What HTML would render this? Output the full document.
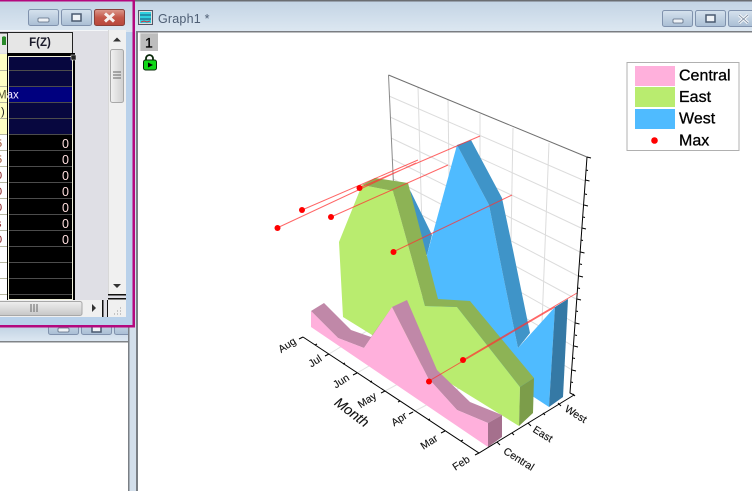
<!DOCTYPE html>
<html><head><meta charset="utf-8">
<style>
html,body{margin:0;padding:0;background:#fff;width:752px;height:491px;overflow:hidden}
svg{display:block}
text{font-family:"Liberation Sans",sans-serif}
</style></head><body>
<svg width="752" height="491" viewBox="0 0 752 491" xmlns="http://www.w3.org/2000/svg">
<defs>
<linearGradient id="tb" x1="0" y1="0" x2="0" y2="1"><stop offset="0" stop-color="#c2d3e4"/><stop offset="1" stop-color="#dce7f1"/></linearGradient>
<linearGradient id="btn" x1="0" y1="0" x2="0" y2="1"><stop offset="0" stop-color="#d6e2ee"/><stop offset="1" stop-color="#a9bed4"/></linearGradient>
<linearGradient id="cls" x1="0" y1="0" x2="0" y2="1"><stop offset="0" stop-color="#dc9a8e"/><stop offset=".5" stop-color="#c4584a"/><stop offset="1" stop-color="#b8483c"/></linearGradient>
<linearGradient id="thumb" x1="0" y1="0" x2="1" y2="0"><stop offset="0" stop-color="#f2f2f2"/><stop offset="1" stop-color="#cfcfcf"/></linearGradient>
<linearGradient id="hthumb" x1="0" y1="0" x2="0" y2="1"><stop offset="0" stop-color="#efefef"/><stop offset="1" stop-color="#c6c6c6"/></linearGradient>
<clipPath id="lowclip"><rect x="0" y="318" width="128" height="30"/></clipPath>
</defs>

<!-- backgrounds -->
<rect width="752" height="491" fill="#fff"/>
<rect x="128" y="0" width="10" height="491" fill="#d3dfeb"/>
<rect x="136" y="31" width="2" height="460" fill="#7a7f85"/>

<!-- right window title -->
<rect x="135" y="0" width="617" height="31" fill="url(#tb)"/>
<rect x="135" y="0" width="617" height="1.5" fill="#6a6d72"/>
<rect x="137" y="31" width="615" height="1.5" fill="#7a7d82"/>
<g stroke="#8092ad" stroke-width="1">
<rect x="662.5" y="10.5" width="30" height="16" rx="2" fill="url(#btn)"/>
<rect x="695.5" y="10.5" width="30" height="16" rx="2" fill="url(#btn)"/>
<rect x="728.5" y="10.5" width="30" height="16" rx="2" fill="url(#btn)"/>
</g>
<rect x="673" y="19" width="10" height="4" rx="1" fill="#eef2f6" stroke="#5a6a80" stroke-width=".8"/>
<rect x="706" y="15" width="9" height="7" fill="#eef2f6" stroke="#4a5a70" stroke-width="1.5"/>
<path d="M739 15l9 8M748 15l-9 8" stroke="#f2f5f8" stroke-width="3"/>
<path d="M739 15l9 8M748 15l-9 8" stroke="#6a7a90" stroke-width=".7"/>
<!-- graph icon -->
<rect x="138.5" y="10.5" width="14" height="14" fill="#ddd" stroke="#556" stroke-width="1"/>
<rect x="140" y="12" width="11" height="11" fill="#2fd0e0"/>
<path d="M140 15h11M140 19h11" stroke="#18507a" stroke-width="1"/>
<path d="M141 22l3-1 3 1 3-1" stroke="#d03040" stroke-width="1" fill="none"/>
<text x="158" y="23" font-size="12.5" fill="#4e5e74" letter-spacing=".2">Graph1 *</text>
<!-- layer 1 -->
<rect x="140" y="33" width="18" height="18" fill="#bdbdbd"/>
<path d="M140 33h18M140 33v18" stroke="#e8e8e8" stroke-width="1"/>
<text x="145" y="47.500" font-size="14" fill="#000" stroke="#000" stroke-width=".3">1</text>
<!-- lock -->
<path d="M146 60v-1.500a3.500 3.500 0 0 1 7 0v1.500" fill="none" stroke="#0a2a0a" stroke-width="1.800"/>
<rect x="143.500" y="60" width="13" height="10" rx="2" fill="#10d818" stroke="#0a2a0a" stroke-width="1"/>
<path d="M148 62.500v5l5-2.500z" fill="#000"/>

<!-- back wall grid -->
<g stroke="#dcdcdc" stroke-width="1" fill="none">
<path d="M418 87L424 298M448 100L451 315M480 114L480 335M513 128L509 354M549 143L540 375"/>
<path d="M389 96L585 181M390 117L583 205M391 138L581 228M392 159L580 252M393 179L578 276M394 200L576 299M395 221L575 323M396 242L573 346M397 263L572 370"/>
</g>
<path d="M388.5 75L587 157" stroke="#707070" stroke-width="1"/>
<path d="M388.5 75L398 283" stroke="#8a8a8a" stroke-width="1"/>
<!-- floor grid -->
<g stroke="#e2e2e2" stroke-width="1" fill="none">
<path d="M329 354L418 300M357 373L448 320M385 391L480 340M413 412L513 360"/>
</g>

<!-- West -->
<path d="M410 190L432 235L427 255L420 250Z" fill="#3f94c8"/>
<path d="M457 145L489 205L504 280L518 348L555 307L549 407L520 388L420 320L427 255Z" fill="#4fbbff"/>
<path d="M457 145L471 140L502 198L513 250L530 333L518 348L504 280L489 205Z" fill="#3f94c8"/>
<path d="M555 307L568 299L563 397L549 407Z" fill="#3579a5"/>
<!-- East -->
<path d="M362 185L393 191L425 306L457 307L520 387L519 426L343 317L339 242Z" fill="#b9ec6f"/>
<path d="M362 185L375 178L408 183L438 299L470 301L534 378L520 387L457 307L425 306L393 191Z" fill="#8db355"/>
<path d="M520 387L534 378L533 413L519 426Z" fill="#7c9d4a"/>
<!-- Central -->
<path d="M324 303L351 330L371 337L392 307L407 300L437 370L470 402L502 415L488 423L457 410L428 378L392 307L364 348L338 338L311 311Z" fill="#c088a8"/>
<path d="M311 311L338 338L364 348L392 307L428 378L457 410L488 423L488 447L311 327Z" fill="#ffb0dc"/>
<path d="M488 423L502 415L502 437L488 447Z" fill="#a5708d"/>

<!-- drop lines -->
<g stroke="#f33" stroke-width="1" opacity=".75" fill="none">
<path d="M302 210L418 160M277 228L416 163M359 188L480 136M331 217L448 165M393 252L512 195M429 381L555 307M463 360L577 293"/>
</g>
<g fill="#f00">
<circle cx="302" cy="210" r="3"/><circle cx="277.500" cy="228" r="3"/><circle cx="331" cy="217" r="3"/><circle cx="359.500" cy="188" r="3"/><circle cx="393.500" cy="252" r="3"/><circle cx="429" cy="381.500" r="3"/><circle cx="463" cy="360" r="3"/>
</g>

<!-- axes -->
<g stroke="#000" stroke-width="1" fill="none">
<path d="M303 337L479 453L574 395"/>
<path d="M587 157L570 393L574 395"/>
<path d="M303 337l-4 2M329 354l-4 2M357 373l-4 2M385 391l-4 2M413 412l-4 2M445 431l-4 2M479 453l-4 2"/>
<path d="M315 345l2-1M343 364l2-1M370 382l2-1M398 402l2-1M428 420l2-1M461 441l2-1"/>
<path d="M497 442l3 3M512 433l2 2M528 423l3 3M543 413l2 2M558 403l3 3M573 394l2 2"/>
<path d="M587 157l4 1M585.500 180l4 1M584 205l4 1M582 228l4 1M580.500 252l4 1M579 276l4 1M577 299l4 1M575.500 323l4 1M574 346l4 1M572 370l4 1"/>
<path d="M586 170l2 .5M585 194l2 .5M583 217l2 .5M581 240l2 .5M580 264l2 .5M578 288l2 .5M576 311l2 .5M575 335l2 .5M573 358l2 .5M571 382l2 .5"/>
</g>
<g font-size="10.500" fill="#111" text-anchor="middle" stroke="#111" stroke-width=".12">
<text transform="translate(289 348) rotate(-33)">Aug</text>
<text transform="translate(317 364) rotate(-33)">Jul</text>
<text transform="translate(343 384) rotate(-33)">Jun</text>
<text transform="translate(369 403) rotate(-33)">May</text>
<text transform="translate(401 422) rotate(-33)">Apr</text>
<text transform="translate(431 445) rotate(-33)">Mar</text>
<text transform="translate(463 466) rotate(-33)">Feb</text>
<text transform="translate(517 462) rotate(32)">Central</text>
<text transform="translate(541 437) rotate(32)">East</text>
<text transform="translate(574 417) rotate(32)">West</text>
<text transform="translate(349 416) rotate(37)" font-size="14" font-style="italic">Month</text>
</g>

<!-- legend -->
<rect x="627" y="62.500" width="112" height="88" fill="#fff" stroke="#b0b0b0" stroke-width="1"/>
<rect x="635" y="66" width="40" height="20" fill="#ffb0dc"/>
<rect x="635" y="87" width="40" height="20" fill="#b9ec6f"/>
<rect x="635" y="109" width="40" height="20" fill="#4fbbff"/>
<circle cx="654.500" cy="140.500" r="3.300" fill="#f00"/>
<g font-size="16" fill="#000" stroke="#000" stroke-width=".3">
<text x="679" y="80.500">Central</text>
<text x="679" y="102">East</text>
<text x="679" y="123.500">West</text>
<text x="679" y="145.500">Max</text>
</g>

<!-- lower-left window -->
<rect x="0" y="327" width="128" height="14" fill="url(#tb)"/>
<rect x="0" y="341" width="128" height="1.500" fill="#808488"/>
<rect x="128" y="327" width="1.500" height="164" fill="#7a7f85"/>
<g clip-path="url(#lowclip)">
<g stroke="#8092ad" fill="url(#btn)">
<rect x="48.500" y="318" width="30" height="16.500" rx="2"/>
<rect x="81.500" y="318" width="30" height="16.500" rx="2"/>
<rect x="114.500" y="318" width="30" height="16.500" rx="2"/>
</g>
</g>
<rect x="58" y="328" width="11" height="4" rx="1" fill="#eef2f6" stroke="#5a6a80" stroke-width=".8"/>
<rect x="92" y="326" width="9" height="6" fill="#eef2f6" stroke="#4a5a70" stroke-width="1.500"/>

<!-- upper-left window -->
<rect x="0" y="0" width="133" height="326" fill="#b9d1ea"/>
<rect x="0" y="0" width="133" height="32" fill="url(#tb)"/>
<rect x="0" y="30" width="126" height="287" fill="#dfdfe5"/>
<rect x="0" y="30" width="126" height="1" fill="#f4f6f8"/>
<g stroke="#8092ad" stroke-width="1">
<rect x="28.500" y="9.500" width="30" height="16" rx="2" fill="url(#btn)"/>
<rect x="61.500" y="9.500" width="30" height="16" rx="2" fill="url(#btn)"/>
<rect x="94.500" y="9.500" width="30" height="16" rx="2" fill="url(#cls)" stroke="#8a4038"/>
</g>
<rect x="38" y="18" width="11" height="4" rx="1" fill="#eef2f6" stroke="#5a6a80" stroke-width=".8"/>
<rect x="72" y="14" width="9" height="7" fill="#eef2f6" stroke="#4a5a70" stroke-width="1.500"/>
<path d="M105 13.500l9 8M114 13.500l-9 8" stroke="#f6f0ee" stroke-width="3"/>
<!-- row header strip -->
<rect x="0" y="54" width="7" height="80" fill="#ffffc4"/>
<rect x="0" y="134" width="7" height="166" fill="#fff"/>
<rect x="0" y="32" width="7" height="21" fill="#e8e8e8"/>
<path d="M2 37a3 3 0 0 1 4 0v8H2z" fill="#2a8a2a"/>
<rect x="0" y="32" width="7" height="1.500" fill="#222"/>
<g stroke="#b8b8a0" stroke-width="1"><path d="M0 70.500h7M0 86.500h7M0 102.500h7M0 118.500h7M0 134.500h7M0 150.500h7M0 166.500h7M0 182.500h7M0 198.500h7M0 214.500h7M0 230.500h7M0 246.500h7M0 262.500h7M0 278.500h7M0 294.500h7"/></g>
<text x="1" y="115" font-size="11" fill="#222">)</text>
<g font-size="11" fill="#8a2020">
<text x="-4" y="147" fill="#a05030">5</text><text x="-4" y="163" fill="#a05030">5</text><text x="-4" y="179">0</text><text x="-4" y="195">0</text><text x="-4" y="211">0</text><text x="-4" y="227">s</text><text x="-4" y="243">0</text>
</g>
<!-- F(Z) header -->
<rect x="7.500" y="32.500" width="65" height="21" fill="#e6e6e6" stroke="#222" stroke-width="1"/>
<text x="40" y="46" font-size="11.500" font-weight="bold" fill="#1a1a2a" text-anchor="middle">F(Z)</text>
<rect x="7" y="53" width="68" height="2" fill="#000"/>
<!-- column -->
<rect x="7" y="55" width="68" height="245" fill="#000"/>
<rect x="8.500" y="56.500" width="64" height="243" fill="#000" stroke="#f0f0d8" stroke-width="1"/>
<rect x="9" y="57" width="63" height="77" fill="#07073f"/>
<rect x="9" y="87" width="63" height="15" fill="#00007f"/>
<g stroke="#4c4c4c" stroke-width="1"><path d="M9 70.500h63M9 86.500h63M9 102.500h63M9 118.500h63M9 134.500h63M9 150.500h63M9 166.500h63M9 182.500h63M9 198.500h63M9 214.500h63M9 230.500h63M9 246.500h63M9 262.500h63M9 278.500h63M9 294.500h63"/></g>
<rect x="71" y="55" width="5" height="5" fill="#222" stroke="#eee" stroke-width=".5"/>
<text x="-3" y="98.500" font-size="11.500" fill="#f0e6ff"><tspan fill="#553">M</tspan>ax</text>
<g font-size="12.500" fill="#ffdede" text-anchor="end">
<text x="69" y="148">0</text><text x="69" y="164">0</text><text x="69" y="180">0</text><text x="69" y="196">0</text><text x="69" y="212">0</text><text x="69" y="228">0</text><text x="69" y="244">0</text>
</g>
<!-- vertical scrollbar -->
<rect x="108" y="30" width="18" height="264" fill="#f0f0f0"/>
<path d="M108.500 30v264" stroke="#d8d8d8"/>
<path d="M113 41.500h8l-4-4z" fill="#333"/>
<rect x="110.500" y="49.500" width="13" height="53" rx="2" fill="url(#thumb)" stroke="#a8a8a8"/>
<path d="M113 72h8M113 75h8M113 78h8" stroke="#666"/>
<path d="M113 284h8l-4 4z" fill="#333"/>
<rect x="108" y="294" width="18" height="1.500" fill="#111"/>
<rect x="108" y="298" width="18" height="1" fill="#111"/>
<!-- horizontal scrollbar -->
<rect x="0" y="300" width="102" height="17" fill="#f0f0f0"/>
<rect x="-2" y="301.500" width="84" height="14" rx="2" fill="url(#hthumb)" stroke="#a8a8a8"/>
<path d="M31 304v8M34 304v8M37 304v8" stroke="#666"/>
<path d="M92 304v8l4-4z" fill="#333"/>
<rect x="102" y="300" width="1.500" height="17" fill="#111"/>
<rect x="107" y="300" width="1.500" height="17" fill="#111"/>
<rect x="108" y="299" width="18" height="18" fill="#f0f0f0"/>
<path d="M108 299h18" stroke="#111"/>
<path d="M120 314h1M117 314h1M114 314h1M120 311h1M117 311h1M120 308h1" stroke="#999"/>
<!-- magenta frame -->
<rect x="132.500" y="0" width="2.500" height="327.500" fill="#b4087e"/>
<rect x="0" y="325" width="135" height="2.500" fill="#b4087e"/>
<rect x="0" y="0" width="135" height="1.500" fill="#b4087e"/>
</svg>
</body></html>
